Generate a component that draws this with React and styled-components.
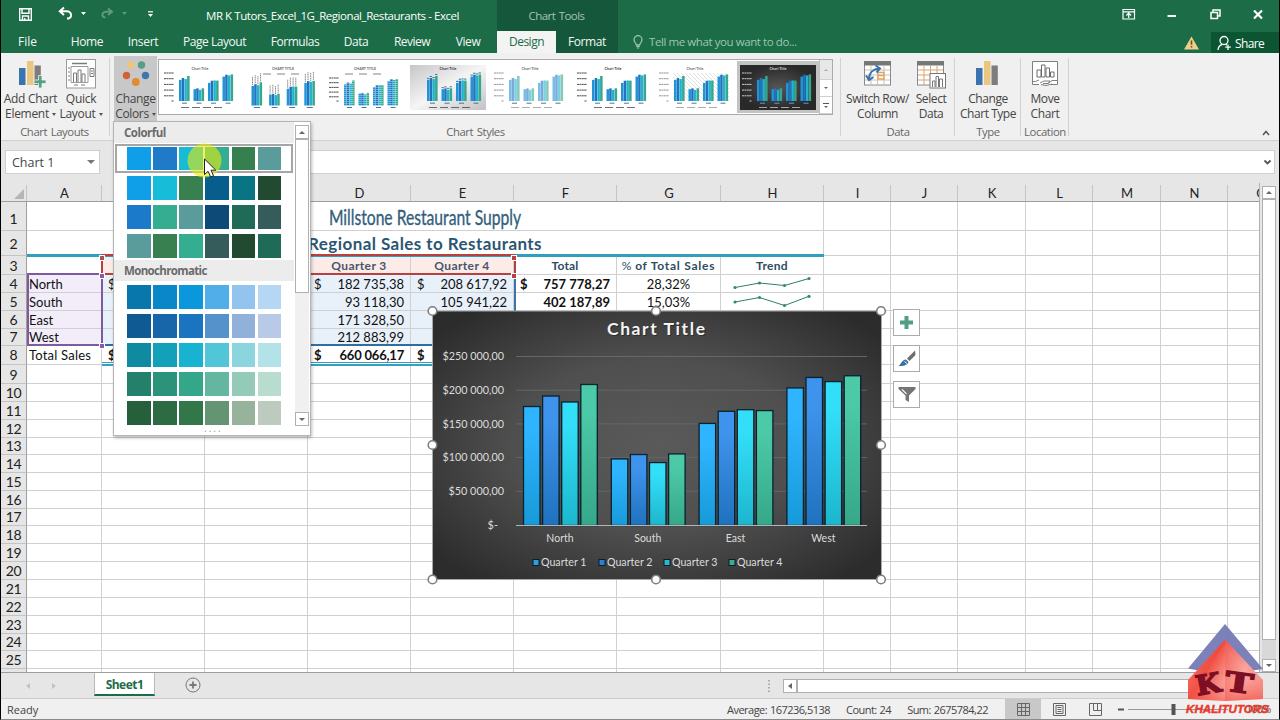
import React from "react";
import styled, { createGlobalStyle } from "styled-components";

const GlobalStyle = createGlobalStyle`
  * { box-sizing: border-box; }
  body { margin: 0; background: #000; overflow: hidden; }
`;

const UI_FONT = `"Open Sans", "Noto Sans", sans-serif`;
const SHEET_FONT = `Lato, "Open Sans", sans-serif`;

// Window
const Window = styled.div`
  position: relative;
  display: flex;
  flex-direction: column;
  width: 1280px;
  height: 720px;
  border-left: 1px solid #000;
  border-right: 1px solid #000;
  border-bottom: 1px solid #8a8a8a;
  background: #e6e6e6;
  overflow: hidden;
  font-family: ${UI_FONT};
  font-size: 12px;
  color: #444;
  white-space: nowrap;
`;

const Header = styled.div`
  display: flex;
  height: 53px;
  flex: none;
  background: #1b6c47;
  color: #fff;
`;

const HeaderLeft = styled.div`
  width: 496px;
  flex: none;
`;

const QuickBar = styled.div`
  display: flex;
  align-items: center;
  height: 31px;
`;

const QuickIcons = styled.div`
  width: 205px;
  height: 31px;
  flex: none;
`;

const FileTitle = styled.div`
  font-size: 11.5px;
  letter-spacing: ${(props) => props.track || 0}px;
`;

const TabRow = styled.div`
  display: flex;
  height: 22px;
  align-items: center;
`;

const Tab = styled.div`
  display: flex;
  align-items: center;
  justify-content: center;
  width: ${(props) => props.w}px;
  height: 22px;
  flex: none;
  padding-bottom: 1px;
  font-size: 12px;
  letter-spacing: ${(props) => props.track || 0}px;
  color: ${(props) => (props.active ? "#1b6c47" : "#f2f8f4")};
  background: ${(props) => (props.active ? "#f3f3f3" : "transparent")};
`;

const ChartTools = styled.div`
  width: 121px;
  flex: none;
  background: #15573a;
`;

const ChartToolsLabel = styled.div`
  height: 31px;
  line-height: 32px;
  padding-right: 2px;
  text-align: center;
  font-size: 11.5px;
  letter-spacing: -0.55px;
  word-spacing: 1px;
  color: #a3c4b3;
`;

const TellMe = styled.div`
  display: flex;
  flex: 1;
  align-items: center;
  align-self: flex-end;
  height: 22px;
  gap: 6px;
  padding: 0 0 1px 15px;
  font-size: 11.5px;
  letter-spacing: -0.42px;
  color: #9fc7b2;
`;

const HeaderRight = styled.div`
  width: 178px;
  flex: none;
`;

const ShareRow = styled.div`
  display: flex;
  height: 22px;
  margin-top: -3px;
  align-items: center;
  justify-content: flex-end;
  gap: 12px;
`;

const Share = styled.div`
  display: flex;
  align-items: center;
  gap: 3px;
  width: 68px;
  height: 22px;
  padding-left: 6px;
  background: #0b5532;
  font-size: 12px;
  letter-spacing: -0.6px;
`;

// Ribbon
const Ribbon = styled.div`
  display: flex;
  height: 88px;
  flex: none;
  background: #f0f0f0;
  border-bottom: 1px solid #d0d0d0;
`;

const Group = styled.div`
  position: relative;
  display: flex;
  flex-direction: column;
  width: ${(props) => props.w}px;
  flex: none;
  &::after {
    content: "";
    position: absolute;
    right: 0;
    top: 5px;
    width: 1px;
    height: 78px;
    background: #d2d2d2;
  }
`;

const GroupBody = styled.div`
  display: flex;
  height: 68px;
  padding-left: ${(props) => props.left || 0}px;
`;

const GroupLabel = styled.div`
  height: 20px;
  line-height: 21px;
  text-align: center;
  padding-right: ${(props) => props.shift || 0}px;
  font-size: 11.3px;
  letter-spacing: -0.4px;
  word-spacing: 1px;
  color: #666;
`;

const BigButton = styled.div`
  display: flex;
  flex-direction: column;
  align-items: center;
  width: ${(props) => props.w}px;
  flex: none;
  margin-top: 3px;
  padding-top: 3px;
  background: ${(props) => (props.pressed ? "#c8c8c8" : "transparent")};
  font-size: 12px;
  line-height: 15px;
  letter-spacing: ${(props) => props.track || 0}px;
  color: #444;
  svg {
    flex: none;
    margin-bottom: 2px;
  }
`;

const Arrow = styled.i`
  display: inline-block;
  margin: 0 0 2px 3px;
  border: 2.5px solid transparent;
  border-top: 3px solid #555;
  border-bottom: 0;
`;

const Gallery = styled.div`
  display: flex;
  width: 675px;
  height: 56px;
  margin: 6px 0 0 1px;
  border: 1px solid #ababab;
  background: #fff;
`;

const Thumb = styled.div`
  display: flex;
  align-items: center;
  justify-content: center;
  width: 82.5px;
  height: 52px;
  margin-top: 1px;
  flex: none;
  background: ${(props) => (props.selected ? "#c3c3c3" : "transparent")};
`;

const GalleryScroll = styled.div`
  display: grid;
  grid-template-rows: 20px 17px 17px;
  width: 13px;
  margin-left: auto;
  border-left: 1px solid #c0c0c0;
`;

const GalleryArrow = styled.div`
  display: flex;
  flex-direction: column;
  align-items: center;
  justify-content: center;
  gap: 2px;
  border-bottom: 1px solid #d0d0d0;
  background: ${(props) => (props.off ? "#e8e8e8" : "#fff")};
`;

// Formula bar
const FormulaBar = styled.div`
  display: flex;
  height: 42px;
  flex: none;
  padding: 9px 4px 9px 4px;
  background: #e6e6e6;
`;

const NameBox = styled.div`
  display: flex;
  align-items: center;
  justify-content: space-between;
  width: 95px;
  padding: 0 4px 0 6px;
  border: 1px solid #cfcfcf;
  background: #fff;
  font-size: 12.5px;
`;

const FormulaInput = styled.div`
  display: flex;
  align-items: center;
  justify-content: flex-end;
  flex: 1;
  margin-left: 90px;
  padding-right: 2px;
  border: 1px solid #cfcfcf;
  background: #fff;
`;

// Sheet
const COLS = [26, 75, 103, 103, 103, 103, 103, 104, 103, 67, 67, 68, 67, 68, 67, 67];
const ROWS = [29, 25, 19, 18, 18, 18, 17, 19, 19, 18, 18, 18, 17, 18, 18, 18, 17, 18, 18, 18, 18, 18, 18, 17, 18, 4];

const SheetArea = styled.div`
  position: relative;
  display: flex;
  height: 490px;
  flex: none;
  font-family: ${SHEET_FONT};
  border-bottom: 1px solid #9e9e9e;
`;

const Grid = styled.div`
  width: 1259px;
  flex: none;
  overflow: hidden;
  border-right: 1px solid #b0b0b0;
  background: #fff;
`;

const GridRow = styled.div`
  display: grid;
  grid-template-columns: ${COLS.map((c) => c + "px").join(" ")};
  height: ${(props) => props.h}px;
`;

const ColHead = styled.div`
  display: flex;
  align-items: flex-end;
  justify-content: center;
  overflow: hidden;
  background: linear-gradient(#c4c4c4, #c4c4c4) right bottom / 1px 16px no-repeat #e6e6e6;
  border-bottom: 1px solid #9e9e9e;
  font-size: 13px;
  line-height: 16px;
  color: #222;
`;

const RowHead = styled.div`
  display: flex;
  align-items: flex-end;
  justify-content: center;
  overflow: hidden;
  padding-bottom: ${(props) => props.low || 0}px;
  background: #e6e6e6;
  border-right: 1px solid #9e9e9e;
  border-bottom: 1px solid #c4c4c4;
  font-size: 14px;
  line-height: 16px;
  letter-spacing: -0.3px;
  color: #222;
`;

const TINTS = { purple: "#f2edf9", pink: "#fdebe7", blue: "#e8f0fa" };

const Cell = styled.div`
  display: flex;
  align-items: flex-end;
  justify-content: ${(props) => props.align || "flex-start"};
  grid-column: span ${(props) => props.span || 1};
  padding: 0 ${(props) => (props.align === "center" ? 2 : 6)}px ${(props) => props.lift || 0}px 2px;
  overflow: hidden;
  border-right: 1px solid #d0d0d0;
  border-bottom: 1px solid #d0d0d0;
  background: ${(props) => TINTS[props.tint] || "#fff"};
  font-size: ${(props) => props.size || 13.5}px;
  font-weight: ${(props) => (props.bold ? 700 : 400)};
  line-height: 16px;
  letter-spacing: ${(props) => props.track || 0}px;
  color: ${(props) => props.color || "#111"};
`;

const Currency = styled.span`
  margin-right: auto;
  padding-left: 4px;
`;

const Condensed = styled.span`
  font-size: 21px;
  line-height: 27px;
  transform: scaleX(0.745);
  -webkit-text-stroke: 0.35px #33607c;
`;

// Coloured range outline drawn over the cells
const Range = styled.div`
  position: absolute;
  left: ${(props) => props.x}px;
  top: ${(props) => props.y}px;
  width: ${(props) => props.w}px;
  height: ${(props) => props.h}px;
  border: 2px solid ${(props) => props.color};
`;

const Knob = styled.div`
  position: absolute;
  left: ${(props) => props.x}px;
  top: ${(props) => props.y}px;
  width: 6px;
  height: 6px;
  border: 0.5px solid #fff;
  background: ${(props) => props.color};
`;

const Rule = styled.div`
  position: absolute;
  left: ${(props) => props.x}px;
  top: ${(props) => props.y}px;
  width: ${(props) => props.w}px;
  height: ${(props) => props.h}px;
  background: ${(props) => props.color};
`;

const VScroll = styled.div`
  display: flex;
  flex-direction: column;
  width: 14px;
  margin: 3px 0 0 2px;
`;

const ScrollButton = styled.div`
  display: flex;
  align-items: center;
  justify-content: center;
  width: ${(props) => props.w || 14}px;
  height: ${(props) => props.h || 14}px;
  flex: none;
  border: 1px solid #b0b0b0;
  background: #fff;
`;

const ScrollThumb = styled.div`
  height: ${(props) => props.h}px;
  flex: none;
  border: 1px solid #b0b0b0;
  background: #fff;
`;

const Track = styled.div`
  flex: 1;
  background: ${(props) => props.bg || "#d8d8d8"};
`;

const Triangle = styled.i`
  width: 0;
  height: 0;
  border: ${(props) => props.s || 3.5}px solid transparent;
  ${(props) => {
    const s = props.s || 3.5;
    const c = props.color || "#666";
    if (props.dir === "up") return `border-bottom: ${s}px solid ${c}; border-top: 0;`;
    if (props.dir === "left") return `border-right: ${s + 1}px solid ${c}; border-left: 0;`;
    if (props.dir === "right") return `border-left: ${s + 1}px solid ${c}; border-right: 0;`;
    return `border-top: ${s}px solid ${c}; border-bottom: 0;`;
  }}
`;

// Sheet tabs and status bar
const SheetTabs = styled.div`
  display: flex;
  height: 26px;
  flex: none;
  background: #e6e6e6;
  border-bottom: 1px solid #cdcdcd;
`;

const TabNav = styled.div`
  display: flex;
  align-items: center;
  gap: 22px;
  width: 93px;
  padding-left: 25px;
`;

const SheetTab = styled.div`
  width: 61px;
  height: 24px;
  margin-top: -1px;
  border: 1px solid #b8b8b8;
  border-top: 0;
  border-bottom: 2px solid #1b6c47;
  background: #fff;
  text-align: center;
  line-height: 26px;
  font-size: 12px;
  font-weight: 700;
  letter-spacing: -0.5px;
  color: #1b6c47;
`;

const AddSheet = styled.div`
  margin: 4px 0 0 30px;
  height: 16px;
`;

const HScroll = styled.div`
  display: flex;
  align-items: center;
  width: 511px;
  margin-left: auto;
  svg {
    margin-right: 13px;
  }
`;

const StatusBar = styled.div`
  display: flex;
  align-items: center;
  height: 20px;
  flex: none;
  padding-left: 6px;
  background: #f0f0f0;
  font-size: 11px;
  color: #444;
`;

const Stats = styled.div`
  display: flex;
  gap: 16px;
  margin-left: auto;
  font-size: 11px;
  letter-spacing: -0.52px;
  word-spacing: 0.5px;
`;

const ViewButton = styled.div`
  display: flex;
  align-items: center;
  justify-content: center;
  width: 36px;
  height: 20px;
  margin-left: ${(props) => props.gap || 0}px;
  background: ${(props) => (props.on ? "#c8c8c8" : "transparent")};
`;

const Zoom = styled.div`
  display: flex;
  align-items: center;
  width: 166px;
  padding-left: 5px;
`;

const ZoomText = styled.span`
  margin-left: 8px;
  font-size: 10.5px;
  letter-spacing: -0.5px;
`;

// Colour dropdown
const Dropdown = styled.div`
  position: absolute;
  left: 112px;
  top: 121px;
  display: flex;
  width: 198px;
  height: 315px;
  border: 1px solid #b4b4b4;
  background: #fff;
  box-shadow: 1px 2px 3px rgba(0, 0, 0, 0.25);
`;

const Palette = styled.div`
  width: 180px;
  flex: none;
`;

const PaletteTitle = styled.div`
  height: ${(props) => props.h}px;
  margin-bottom: 1px;
  padding-left: 10px;
  line-height: ${(props) => props.h}px;
  background: #ececec;
  font-size: 11.5px;
  font-weight: 700;
  letter-spacing: ${(props) => props.track}px;
  color: #6a6a6a;
`;

const SwatchRow = styled.div`
  display: grid;
  grid-template-columns: repeat(6, 1fr);
  column-gap: 2.4px;
  width: 178px;
  height: 29.1px;
  margin-left: 1px;
  border: ${(props) => (props.selected ? "2px solid #a6a6a6" : "0 solid #fff")};
  padding: ${(props) => (props.selected ? "1px 9.5px 1px 9.8px" : "2.7px 11.5px 2.7px 11.8px")};
`;

const Swatch = styled.div`
  background: ${(props) => props.color};
`;

const Grip = styled.div`
  height: 8px;
  line-height: 0;
  padding-left: 90px;
  font-size: 10px;
  letter-spacing: 2px;
  color: #999;
`;

const DropScroll = styled.div`
  display: flex;
  flex-direction: column;
  width: 14px;
  height: 301px;
  margin: 3px 0 0 1px;
`;

const ChartBox = styled.div`
  position: absolute;
  left: 423px;
  top: 302px;
`;

const SideButtons = styled.div`
  position: absolute;
  left: 892px;
  top: 309px;
  display: flex;
  flex-direction: column;
  gap: 9px;
`;

const SideButton = styled.div`
  display: flex;
  align-items: center;
  justify-content: center;
  width: 27px;
  height: 27px;
  border: 1px solid #ababab;
  background: #fff;
`;

const CursorLayer = styled.div`
  position: absolute;
  left: 185px;
  top: 143px;
`;

const LogoLayer = styled.div`
  position: absolute;
  left: 1178px;
  top: 620px;
`;

const CollapseButton = styled.div`
  margin: 70px 9px 0 auto;
`;

// Data
const DATA = [
  { name: "North", values: [176, 191.5, 182.7, 208.6] },
  { name: "South", values: [98.5, 105, 93.1, 105.9] },
  { name: "East", values: [151, 169, 171.3, 170] },
  { name: "West", values: [203.5, 219, 212.9, 221.5] },
];

const COLORFUL = [
  ["#0f9fe8", "#1f7bc8", "#17bcd4", "#34ad91", "#36804f", "#5a9b9b"],
  ["#0f9fe8", "#17bcd8", "#38804f", "#075d8c", "#087484", "#214a30"],
  ["#1b7bca", "#34ad91", "#5a9b9b", "#0e4a78", "#206a58", "#355c5b"],
  ["#5a9b9b", "#38804f", "#34ad91", "#355c5b", "#214a30", "#206a58"],
];

const MONO = [
  ["#0877ab", "#0a87c9", "#0b97dc", "#52aee8", "#93c4ef", "#b5d7f4"],
  ["#105a94", "#1766a9", "#1b74c0", "#5591cb", "#92b1da", "#b8cae6"],
  ["#0f8aa0", "#12a1b8", "#18b3d0", "#50c6d8", "#8bd6de", "#b3e3e8"],
  ["#247f6b", "#2c937a", "#34a68a", "#63b69f", "#95cab8", "#b9dccf"],
  ["#265f3b", "#2d6c43", "#32774a", "#649472", "#98b39c", "#bccbbe"],
];

const TABS = [
  ["File", 53, 0],
  ["Home", 66, -0.4],
  ["Insert", 46, -0.3],
  ["Page Layout", 97, -0.45],
  ["Formulas", 64, -0.45],
  ["Data", 58, -0.4],
  ["Review", 54, -0.5],
  ["View", 58, -0.4],
];

const LETTERS = ["A", "B", "C", "D", "E", "F", "G", "H", "I", "J", "K", "L", "M", "N", "O"];

const THUMBS = [
  { kind: "plain" },
  { kind: "labels" },
  { kind: "striped" },
  { kind: "grey" },
  { kind: "pale" },
  { kind: "plain", strong: true },
  { kind: "hatched" },
  { kind: "dark" },
];

const CELLS = {
  4: { name: "North", d: "182 735,38", e: "208 617,92", f: "757 778,27", g: "28,32%", usd: true, trend: [12.5, 8, 10.5, 3.5] },
  5: { name: "South", d: "93 118,30", e: "105 941,22", f: "402 187,89", g: "15,03%", trend: [9, 4.5, 12.5, 3.3] },
  6: { name: "East", d: "171 328,50", e: "", f: "", g: "" },
  7: { name: "West", d: "212 883,99", e: "", f: "", g: "" },
  8: { name: "Total Sales", d: "660 066,17", e: "", f: "", g: "", usd: true, total: true },
};

// Icons
const QuickAccess = () => (
  <svg width="205" height="31" fill="none" stroke="#fff" strokeWidth="1.4">
    <path d="M18.7 8.7h11.600v11.600H18.700zM21 9v4.200h7V9M21.500 20v-4h6v4M23.800 18v2" />
    <path d="M63 7.500l-4.200 3.800 4.200 3.800M59 11.300h7c3 .2 4.500 2.300 4 4.700-.5 2-2 2.600-4 2.600" strokeWidth="2" />
    <path d="M80 12h5l-2.500 3z" fill="#fff" stroke="none" />
    <g opacity="0.3">
      <path d="M107 8.500l4 3.300-4 3.300M111 11.800h-6c-3 .2-4 2-3.500 3.700.4 1.500 1.500 2 3 2" strokeWidth="2" />
      <path d="M121 12h5l-2.500 3z" fill="#fff" stroke="none" />
    </g>
    <path d="M147 11.800h5" strokeWidth="1.200" />
    <path d="M147 14h5l-2.500 3z" fill="#fff" stroke="none" />
  </svg>
);

const WindowButtons = () => (
  <svg width="178" height="31" fill="none" stroke="#fff" strokeWidth="1.200">
    <path d="M22 9.500h11.500v9.500H22zM22 11.800h11.500M27.700 18v-4.500M25.300 15.500l2.400-2.300 2.400 2.300" />
    <path d="M66.500 16H75" strokeWidth="2" />
    <path d="M110 12.500h6.500v6H110zM112 12.500V10h7v6h-2.500" strokeWidth="1.500" />
    <path d="M153 10.500l8 8M161 10.500l-8 8" strokeWidth="2.200" />
  </svg>
);

const Bulb = () => (
  <svg width="10" height="14" viewBox="0 0 10 14" fill="none" stroke="#9fc7b2" strokeWidth="1.200">
    <path d="M3.200 9.800C3.200 8 1 7.300 1 4.700a4 4 0 0 1 8 0C9 7.300 6.800 8 6.800 9.800zM3.200 11.300h3.600M3.800 13h2.400" />
  </svg>
);

const Warning = () => (
  <svg width="15" height="14" viewBox="0 0 15 14">
    <path d="M7.500 .5L15 13.500H0z" fill="#ecd089" />
    <path d="M7.500 4.500v4.200M7.500 10v1.600" stroke="#7a4a10" strokeWidth="1.600" />
  </svg>
);

const Person = () => (
  <svg width="15" height="16" viewBox="0 0 15 16" fill="none" stroke="#fff" strokeWidth="1.300">
    <circle cx="7" cy="5.500" r="4" />
    <path d="M1 15c.3-3 2-5 4.500-5.600M8.500 9.300l1.500.8M11 9.500v5.500M8.200 12.200h5.600" />
  </svg>
);

const Bars = ({ plus }) => (
  <svg width="30" height="30" viewBox="0 0 30 30">
    <rect x="3" y="9" width="6.500" height="17" fill="#3a73ad" />
    <rect x="11" y="2" width="6.500" height="24" fill="#eac680" />
    <rect x="18.500" y="6.500" width="6.300" height="19.500" fill="#7d7d7d" />
    {plus && (
      <path d="M18 21h4.500v-4.500H26V21h4v3.500h-4V29h-3.500v-4.500H18z" fill="#55a184" stroke="#f0f0f0" strokeWidth="0.800" />
    )}
  </svg>
);

const QuickLayout = () => (
  <svg width="30" height="30" viewBox="0 0 30 30" fill="none" stroke="#7a7a7a">
    <rect x=".5" y=".5" width="29" height="28.500" fill="#fff" stroke="#9a9a9a" />
    <path d="M6 4.500h15" strokeWidth="1.500" />
    <path d="M5 7.500h17v16H5z" stroke="#9a9a9a" />
    <path d="M7.500 23V14h3v9M12 23V11h3v12M16 23v-8h3v8" />
    <path d="M24 9.500h4v8h-4zM25 12h2M25 14.500h2M2 9h2M2 13h2M2 17h2M2 21h2M8 26h4M15 26h4" />
  </svg>
);

const ColorDots = () => (
  <svg width="30" height="30" viewBox="0 0 30 30">
    <circle cx="10" cy="6" r="3.700" fill="#edc57c" />
    <circle cx="20.500" cy="6" r="3.700" fill="#579d88" />
    <circle cx="5.500" cy="16.500" r="3.700" fill="#d75f38" />
    <circle cx="24.500" cy="16.500" r="3.700" fill="#4176ab" />
    <circle cx="14.800" cy="23" r="3.900" fill="#e28b32" />
  </svg>
);

const TableIcon = ({ swap }) => (
  <svg width="30" height="30" viewBox="0 0 30 30" fill="none">
    <rect x="1.500" y="2.500" width="26" height="23.500" fill="#fff" stroke="#8a8a8a" />
    <rect x="1" y="2" width="27" height="4.500" fill="#777" />
    <path d="M2 11h25M2 16h25M2 21h25M8 7v19M14.500 7v19M21 7v19" stroke={swap ? "#c9c2b5" : "#dba36f"} />
    {swap ? (
      <>
        <path d="M15 13.500h6v6.500h-6zM15 16.500h6" stroke="#e3a35c" strokeWidth="1.300" />
        <path d="M6 20c0-6 4-10 10-10.500M12.500 6.500l4.500 3-3.500 4M3 16.500L6 21l4.500-3" stroke="#3a73ad" strokeWidth="2" />
      </>
    ) : (
      <>
        <rect x="14" y="14.500" width="15.500" height="14.500" fill="#fff" stroke="#777" />
        <path d="M16.500 28v-6h2.500v6M20 28v-10.500h2.500V28M23.500 28v-8h3v8" stroke="#777" />
      </>
    )}
  </svg>
);

const MoveIcon = () => (
  <svg width="30" height="30" viewBox="0 0 30 30" fill="none" stroke="#808080">
    <path d="M9 25.500H2.500v-23h25v23H21" fill="#fff" />
    <path d="M7 18v-7h4v7zM11.500 18V6h3.500v12zM16 18V9h3.500v9zM20.500 18v-5H24v5z" stroke="#6c6c6c" />
    <path d="M2.500 22.500h3l3.500-1.500M10 24l4-2h6l-2 2.500h-5M18 24.500l4-3h5M11 25.500l5 1 6-1.500" />
  </svg>
);

const MiniChart = ({ kind, strong }) => {
  const dark = kind === "dark";
  const ink = dark ? "#ddd" : kind === "pale" || kind === "hatched" ? "#888" : "#333";
  const opacity = kind === "pale" ? 0.6 : 1;
  const fills = ["#1e95d8", "#2272bd", "#20b4cf", "#38a58d"];
  const full = kind === "labels" ? 25 : 27;
  return (
    <svg width="76" height="45" viewBox="0 0 76 45" fontFamily="Lato, sans-serif" fontWeight="700">
      <defs>
        <linearGradient id="mini-grey" x1="0" x2="1" y2="1">
          <stop offset="0" stopColor="#c6c6c9" />
          <stop offset="0.500" stopColor="#f5f5f6" />
          <stop offset="1" stopColor="#c2c2c6" />
        </linearGradient>
        <radialGradient id="mini-dark">
          <stop offset="0" stopColor="#555" />
          <stop offset="1" stopColor="#292929" />
        </radialGradient>
        <pattern id="mini-hatch" width="4" height="4" patternUnits="userSpaceOnUse">
          <path d="M0 0l4 4" stroke="#ccc" strokeWidth="0.600" />
        </pattern>
      </defs>
      {kind === "grey" && <rect width="76" height="45" fill="url(#mini-grey)" />}
      {dark && <rect width="76" height="45" fill="url(#mini-dark)" />}
      {kind === "hatched" && <rect x="16" y="8" width="56" height="28" fill="url(#mini-hatch)" />}
      <text x="38" y="4.500" fontSize="3.600" textAnchor="middle" fill={strong || dark || kind === "grey" ? ink : "#666"}>
        {kind === "labels" || kind === "striped" ? "CHART TITLE" : "Chart Title"}
      </text>
      {kind !== "labels" && kind !== "grey" &&
        [0, 1, 2, 3, 4, 5].map((i) => (
          <path key={i} d={i === 5 ? "M9.500 36h2" : `M2 ${(kind === "striped" ? 13 : 8) + i * (kind === "striped" ? 4.700 : 5.700)}h10`} stroke={ink} strokeWidth="0.900" strokeDasharray="2 .4" />
        ))}
      {(kind === "labels" || kind === "striped") && <path d="M18 9h42" stroke="#777" strokeWidth="0.900" strokeDasharray="8 6" />}
      {DATA.map((g, gi) =>
        g.values.map((v, i) => {
          const h = (v / 225) * full;
          const base = kind === "labels" || kind === "striped" ? 40.500 : 36;
          const x = (kind === "labels" ? 6.500 : 17) + gi * (kind === "labels" ? 17.600 : 14.500) + i * 2.700;
          return (
            <g key={g.name + i}>
              <rect x={x} y={base - h} width="2.500" height={h} fill={fills[i]} opacity={opacity} />
              {kind === "grey" && <path d={`M${x} ${34.500 - h}h2.300`} stroke="#379" />}
              {kind === "striped" && <path d={`M${x + 1.250} ${base}v${-h}`} stroke="#fff" strokeWidth="2.500" strokeDasharray=".6 1.400" opacity="0.700" />}
              {kind === "labels" && <path d={`M${x + 1} ${base - 1 - h}v-8`} stroke="#777" strokeWidth="0.900" strokeDasharray="1.200 .5" />}
            </g>
          );
        })
      )}
      {DATA.map((g, gi) => (
        <path
          key={g.name}
          d={kind === "labels" ? `M${9 + gi * 17.600} 42.500h6` : `M${20 + gi * 14.500} ${kind === "striped" ? 42.500 : 38.200}h5`}
          stroke={dark ? "#6ad" : "#467"}
          strokeWidth="0.900"
        />
      ))}
      {kind !== "labels" && kind !== "striped" && <path d="M19 42.500h41" stroke={ink} strokeWidth="0.700" strokeDasharray="8 3" />}
    </svg>
  );
};

const Spark = styled.svg`
  display: block;
  flex: none;
  margin-left: -2px;
`;

const Sparkline = ({ points }) => {
  const xs = [14, 38.500, 63.500, 88];
  return (
    <Spark width="101" height="17">
      <polyline points={points.map((p, i) => `${xs[i]},${p}`).join(" ")} fill="none" stroke="#2f7d70" strokeWidth="1" />
      {points.map((p, i) => (
        <circle key={i} cx={xs[i]} cy={p} r="1.600" fill="#2f8a74" />
      ))}
    </Spark>
  );
};

// The embedded chart, drawn with an 8px margin round it for the selection handles
const SalesChart = () => {
  const names = ["Quarter 1", "Quarter 2", "Quarter 3", "Quarter 4"];
  const axis = ["$250 000,00", "$200 000,00", "$150 000,00", "$100 000,00", "$50 000,00"];
  const legendX = [108, 174, 239, 304];
  const handles = [[8.500, 9], [232, 9], [457, 9], [8.500, 143], [457, 143], [8.500, 277.500], [232, 277.500], [457, 277.500]];
  return (
    <svg width="466" height="286" fontFamily='Lato, "Open Sans", sans-serif' fontSize="11" fill="#dcdcdc">
      <defs>
        <radialGradient id="bg" cx="0.500" cy="0.500" r="0.640">
          <stop offset="0" stopColor="#5a5a5a" />
          <stop offset="0.500" stopColor="#4f4f4f" />
          <stop offset="1" stopColor="#2c2c2c" />
        </radialGradient>
        {[["#2fb4ff", "#169ad9"], ["#3e93ec", "#1f72bd"], ["#33def8", "#1cb6cd"], ["#4cc9a6", "#35a889"]].map((c, i) => (
          <linearGradient key={i} id={"q" + i} x2="0" y2="1">
            <stop offset="0.200" stopColor={c[0]} />
            <stop offset="1" stopColor={c[1]} />
          </linearGradient>
        ))}
      </defs>
      <rect x="8.500" y="9" width="449" height="268.500" fill="url(#bg)" stroke="#a9a9a9" />
      <text x="184" y="34" fontSize="17.500" fontWeight="700" fill="#1c1c1c" opacity="0.600" textLength="98">Chart Title</text>
      <text x="183" y="33" fontSize="17.500" fontWeight="700" fill="#f4f4f4" textLength="98">Chart Title</text>
      {axis.map((label, i) => (
        <g key={label}>
          <path d={`M92 ${54.500 + i * 33.700}H443`} stroke="#666" />
          <text x={i === 4 ? 24.500 : 18.500} y={58.300 + i * 33.700} textLength={i === 4 ? 55.500 : 61.500} lengthAdjust="spacingAndGlyphs">{label}</text>
        </g>
      ))}
      <text x="63.500" y="227">$-</text>
      {DATA.map((g, gi) => (
        <g key={g.name}>
          {g.values.map((v, i) => {
            const h = v * 0.676;
            return (
              <rect key={i} x={99.500 + gi * 87.800 + i * 19.100} y={223.500 - h} width="16.500" height={h} fill={`url(#q${i})`} stroke="#08222e" strokeWidth="1.300" />
            );
          })}
          <text x={136 + gi * 87.800} y="240" textAnchor="middle" fontSize="10.500">{g.name}</text>
        </g>
      ))}
      <path d="M92 223.500H443" stroke="#b5b5b5" />
      {names.map((n, i) => (
        <g key={n}>
          <rect x={legendX[i] + 1} y="257.500" width="6" height="6" fill={["#2c9ddf", "#2d7fd0", "#27b9cc", "#3dab8c"][i]} stroke="#0b1d26" />
          <text x={legendX[i] + 9} y="264" textLength="45.500" lengthAdjust="spacingAndGlyphs">{n}</text>
        </g>
      ))}
      {handles.map(([x, y]) => (
        <circle key={x + "-" + y} cx={x} cy={y} r="4.300" fill="#fff" stroke="#7e7e7e" strokeWidth="1.600" />
      ))}
    </svg>
  );
};

const Pointer = () => (
  <svg width="36" height="38">
    <circle cx="18.500" cy="17.500" r="17" fill="#e4e912" opacity="0.620" />
    <path d="M18.500 16v15.500l3.600-3.200 2.600 5.700 2.800-1.200-2.500-5.600h4.800z" fill="#fff" stroke="#222" strokeWidth="1" />
  </svg>
);

const Logo = () => (
  <svg width="100" height="100">
    <defs>
      <linearGradient id="house-l" x2="1" y2="1">
        <stop offset="0" stopColor="#ff8a7e" />
        <stop offset="0.500" stopColor="#f0483c" />
        <stop offset="1" stopColor="#ffc1ba" />
      </linearGradient>
      <linearGradient id="house-r" x2="1" y2="0.600">
        <stop offset="0" stopColor="#f2554a" />
        <stop offset="0.600" stopColor="#fba39b" />
        <stop offset="1" stopColor="#f88d84" />
      </linearGradient>
      <linearGradient id="house-b" x2="0" y2="1">
        <stop offset="0" stopColor="#f8685f" stopOpacity="0" />
        <stop offset="1" stopColor="#f14a40" />
      </linearGradient>
    </defs>
    <path d="M46 4L84 49l-14 2-24-26-24 26-13-2.500z" fill="#7377b4" opacity="0.930" />
    <path d="M46 19.500L9 60v19l37 2z" fill="url(#house-l)" opacity="0.960" />
    <path d="M46 19.500L84 60v19l-38 2z" fill="url(#house-r)" opacity="0.960" />
    <path d="M9 60h75v19l-38 2-37-2z" fill="url(#house-b)" opacity="0.600" />
    <g fill="#7d0f25" stroke="#7d0f25" strokeWidth="1.500" fontFamily='"DejaVu Serif", serif' fontWeight="700" fontSize="27">
      <text x="17" y="74" transform="rotate(-10 27 66)" textLength="25" lengthAdjust="spacingAndGlyphs">K</text>
      <text x="46" y="72" transform="rotate(8 58 64)" textLength="28" lengthAdjust="spacingAndGlyphs">T</text>
    </g>
    <text x="7" y="93" fontFamily='"Liberation Sans", sans-serif' fontWeight="700" fontStyle="italic" fontSize="10.500" fill="#e8392c" stroke="#e8392c" strokeWidth="0.400" textLength="83" lengthAdjust="spacingAndGlyphs">
      KHALITUTORS
    </text>
  </svg>
);

const Percent = styled.span`
  margin-right: 3px;
  font-weight: 400;
`;

const SheetRow = ({ n, h }) => {
  const blanks = (from) => LETTERS.slice(from).map((l) => <Cell key={l} />);
  const row = CELLS[n];
  const total = row && row.total;
  return (
    <GridRow h={h}>
      <RowHead low={n < 3 ? 3 : n === 8 ? 1 : 0}>{n < 26 ? n : ""}</RowHead>
      {n === 1 && <Cell span={8} align="center" color="#33607c"><Condensed>Millstone Restaurant Supply</Condensed></Cell>}
      {n === 2 && <Cell span={8} align="center" bold size={17} track={0.430} lift={3} color="#2b5673">Regional Sales to Restaurants</Cell>}
      {n < 3 && blanks(8)}
      {n === 3 && (
        <>
          <Cell />
          {["Quarter 1", "Quarter 2", "Quarter 3", "Quarter 4"].map((q) => (
            <Cell key={q} tint="pink" align="center" bold size={12} track={0.400} color="#46566f">{q}</Cell>
          ))}
          <Cell align="center" bold size={12} track={0.200} color="#2d4c60">Total</Cell>
          <Cell align="center" bold size={12} track={0.750} color="#2d4c60"><Percent>%</Percent>of Total Sales</Cell>
          <Cell align="center" bold size={12} track={0.300} color="#2d4c60">Trend</Cell>
          {blanks(8)}
        </>
      )}
      {row && (
        <>
          <Cell tint={total ? "" : "purple"} size={13} track={total ? 0.200 : 0} lift={total ? 1 : 0}>{row.name}</Cell>
          {["", "", row.d, row.e].map((v, i) => (
            <Cell key={i} tint={total ? "" : "blue"} align="flex-end" bold={total} size={13} track={total ? -0.200 : 0} lift={total ? 1 : 0}>
              {row.usd && <Currency>$</Currency>}
              {v}
            </Cell>
          ))}
          <Cell align="flex-end" bold size={13}>{n === 4 && <Currency>$</Currency>}{row.f}</Cell>
          <Cell align="center" size={13}>{row.g}</Cell>
          <Cell>{row.trend && <Sparkline points={row.trend} />}</Cell>
          {blanks(8)}
        </>
      )}
      {n > 8 && blanks(0)}
    </GridRow>
  );
};

const App = () => (
  <Window>
    <GlobalStyle />
    <Header>
      <HeaderLeft>
        <QuickBar>
          <QuickIcons><QuickAccess /></QuickIcons>
          <FileTitle track={-0.440}>MR K Tutors_Excel_1G_Regional_Restaurants - Excel</FileTitle>
        </QuickBar>
        <TabRow>
          {TABS.map(([name, w, track]) => <Tab key={name} w={w} track={track}>{name}</Tab>)}
        </TabRow>
      </HeaderLeft>
      <ChartTools>
        <ChartToolsLabel>Chart Tools</ChartToolsLabel>
        <TabRow>
          <Tab w={59} active track={-0.500}>Design</Tab>
          <Tab w={62} track={-0.400}>Format</Tab>
        </TabRow>
      </ChartTools>
      <TellMe><Bulb />Tell me what you want to do...</TellMe>
      <HeaderRight>
        <WindowButtons />
        <ShareRow>
          <Warning />
          <Share><Person />Share</Share>
        </ShareRow>
      </HeaderRight>
    </Header>

    <Ribbon>
      <Group w={109}>
        <GroupBody left={4}>
          <BigButton w={51} track={-0.300}><Bars plus />Add Chart<span>Element<Arrow /></span></BigButton>
          <BigButton w={50} track={-0.300}><QuickLayout />Quick<span>Layout<Arrow /></span></BigButton>
        </GroupBody>
        <GroupLabel shift={2}>Chart Layouts</GroupLabel>
      </Group>
      <Group w={731}>
        <GroupBody left={4}>
          <BigButton w={43} pressed track={-0.350}><ColorDots />Change<span>Colors<Arrow /></span></BigButton>
          <Gallery>
            {THUMBS.map((t, i) => (
              <Thumb key={i} selected={t.kind === "dark"}><MiniChart kind={t.kind} strong={t.strong} /></Thumb>
            ))}
            <GalleryScroll>
              <GalleryArrow off><Triangle dir="up" s={2.500} color="#aaa" /></GalleryArrow>
              <GalleryArrow><Triangle s={2.500} /></GalleryArrow>
              <GalleryArrow>
                <svg width="6" height="1"><rect width="6" height="1" fill="#555" /></svg>
                <Triangle s={2.500} />
              </GalleryArrow>
            </GalleryScroll>
          </Gallery>
        </GroupBody>
        <GroupLabel>Chart Styles</GroupLabel>
      </Group>
      <Group w={114}>
        <GroupBody left={2}>
          <BigButton w={69} track={-0.450}><TableIcon swap />Switch Row/<span>Column</span></BigButton>
          <BigButton w={38} track={-0.400}><TableIcon />Select<span>Data</span></BigButton>
        </GroupBody>
        <GroupLabel>Data</GroupLabel>
      </Group>
      <Group w={66}>
        <GroupBody>
          <BigButton w={66} track={-0.450}><Bars />Change<span>Chart Type</span></BigButton>
        </GroupBody>
        <GroupLabel>Type</GroupLabel>
      </Group>
      <Group w={48}>
        <GroupBody>
          <BigButton w={48} track={-0.400}><MoveIcon />Move<span>Chart</span></BigButton>
        </GroupBody>
        <GroupLabel>Location</GroupLabel>
      </Group>
      <CollapseButton>
        <svg width="8" height="6" viewBox="0 0 8 6">
          <path d="M1 5l3-3.500L7 5" fill="none" stroke="#555" strokeWidth="1.500" />
        </svg>
      </CollapseButton>
    </Ribbon>

    <FormulaBar>
      <NameBox>Chart 1<Triangle s={4} color="#777" /></NameBox>
      <FormulaInput>
        <svg width="9" height="7" viewBox="0 0 9 7"><path d="M1.500 1.500l3 3 3-3" fill="none" stroke="#555" strokeWidth="1.800" /></svg>
      </FormulaInput>
    </FormulaBar>

    <SheetArea>
      <Grid>
        <GridRow h={19}>
          <ColHead>
            <svg width="24" height="16"><path d="M22 4v10H12z" fill="#b5b5b5" /></svg>
          </ColHead>
          {LETTERS.map((l) => <ColHead key={l}>{l}</ColHead>)}
        </GridRow>
        {ROWS.map((h, i) => <SheetRow key={i} n={i + 1} h={h} />)}
      </Grid>
      <VScroll>
        <ScrollButton h={13}><Triangle dir="up" /></ScrollButton>
        <ScrollThumb h={441} />
        <Track />
        <ScrollButton h={13}><Triangle /></ScrollButton>
      </VScroll>
      <Rule x={26} y={71} w={797} h={3} color="#2f9fc0" />
      <Rule x={101} y={161} w={340} h={2} color="#2f6f9f" />
      <Rule x={101} y={179} w={340} h={1} color="#36a0c0" />
      <Rule x={101} y={181} w={340} h={2} color="#36a0c0" />
      <Rule x={513} y={92} w={2} h={40} color="#3f72b0" />
      <Range x={26} y={90} w={76} h={73} color="#7d5ba0" />
      <Range x={100} y={71} w={415} h={21} color="#b8403f" />
      <Knob x={98} y={72} color="#b05050" />
      <Knob x={510} y={72} color="#b8403f" />
      <Knob x={510} y={90} color="#b8403f" />
      <Knob x={98} y={90} color="#8a5aa8" />
      <Knob x={98} y={160} color="#8a5aa8" />
    </SheetArea>

    <SheetTabs>
      <TabNav>
        <Triangle dir="left" s={3} color="#c2c2c2" />
        <Triangle dir="right" s={3} color="#c2c2c2" />
      </TabNav>
      <SheetTab>Sheet1</SheetTab>
      <AddSheet>
        <svg width="16" height="16" fill="none" stroke="#777">
          <circle cx="8" cy="8" r="7" />
          <path d="M4.500 8h7M8 4.500v7" strokeWidth="1.800" />
        </svg>
      </AddSheet>
      <HScroll>
        <svg width="2" height="12"><path d="M1 0v12" stroke="#999" strokeWidth="1.500" strokeDasharray="1.500 2" /></svg>
        <ScrollButton w={14} h={14}><Triangle dir="left" /></ScrollButton>
        <ScrollButton w={440} h={14} />
      </HScroll>
    </SheetTabs>

    <StatusBar>
      Ready
      <Stats><span>Average: 167236,5138</span><span>Count: 24</span><span>Sum: 2675784,22</span></Stats>
      <ViewButton on gap={17}>
        <svg width="13" height="13" fill="none" stroke="#666"><path d="M.5.5h12v12H.5zM.5 4.500h12M.5 8.500h12M4.500.5v12M8.500.5v12" /></svg>
      </ViewButton>
      <ViewButton>
        <svg width="13" height="13" fill="none" stroke="#666"><path d="M.5.5h12v12H.5zM3 2.500h7v8H3zM4.500 4.500h4M4.500 6.500h4M4.500 8.500h4" /></svg>
      </ViewButton>
      <ViewButton>
        <svg width="13" height="13" fill="none" stroke="#666"><path d="M.5.5h12v12H.5zM4.500.5v7h8M8.500.5v7" /></svg>
      </ViewButton>
      <Zoom>
        <svg width="120" height="12">
          <path d="M0 6.500h6" stroke="#555" strokeWidth="2" />
          <path d="M10 6.500h100" stroke="#999" />
          <rect x="53.500" y="1" width="4" height="11" fill="#555" />
        </svg>
        <ZoomText>100%</ZoomText>
      </Zoom>
    </StatusBar>

    <ChartBox><SalesChart /></ChartBox>
    <SideButtons>
      <SideButton>
        <svg width="15" height="15"><path d="M5.500 1h4v4.500H14v4H9.500V14h-4V9.500H1v-4h4.500z" fill="#519e83" /></svg>
      </SideButton>
      <SideButton>
        <svg width="18" height="17">
          <path d="M17 .5l.5 4.500-6 6-2.500-2.500z" fill="#6d6d6d" />
          <path d="M8 9.500l2.500 2.500c-1 3-5 4.500-10 4 2.500-1.500 3-6 7.500-6.500z" fill="#39709f" />
          <path d="M6.500 11.500l2.500 2" stroke="#fff" />
        </svg>
      </SideButton>
      <SideButton>
        <svg width="18" height="17"><path d="M.5 1h17v2L11 9.500V16l-3.500-2V9.500L.5 3z" fill="#757575" /><path d="M4 3.300l4.500 4.500" stroke="#fff" strokeWidth="1.200" /></svg>
      </SideButton>
    </SideButtons>

    <Dropdown>
      <Palette>
        <PaletteTitle h={21} track={-0.500}>Colorful</PaletteTitle>
        {COLORFUL.map((row, i) => (
          <SwatchRow key={i} selected={i === 0}>
            {row.map((c, j) => <Swatch key={j} color={c} />)}
          </SwatchRow>
        ))}
        <PaletteTitle h={21} track={-0.650}>Monochromatic</PaletteTitle>
        {MONO.map((row, i) => (
          <SwatchRow key={i}>
            {row.map((c, j) => <Swatch key={j} color={c} />)}
          </SwatchRow>
        ))}
        <Grip>....</Grip>
      </Palette>
      <DropScroll>
        <ScrollButton h={14}><Triangle dir="up" s={3} /></ScrollButton>
        <ScrollThumb h={154} />
        <Track bg="#f0f0f0" />
        <ScrollButton h={14}><Triangle s={3} /></ScrollButton>
      </DropScroll>
    </Dropdown>
    <CursorLayer><Pointer /></CursorLayer>
    <LogoLayer><Logo /></LogoLayer>
  </Window>
);

export default App;
